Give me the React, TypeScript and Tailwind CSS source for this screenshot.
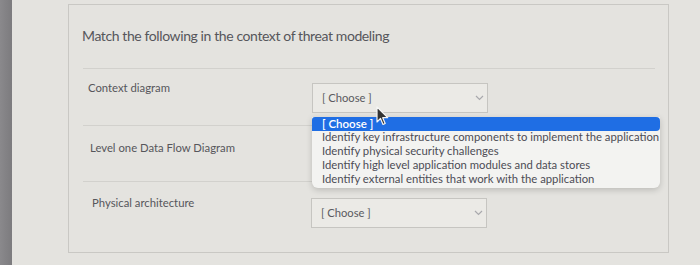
import React from "react";

const Chevron = () => (
  <svg width="9" height="6" viewBox="0 0 9 6" fill="none">
    <path d="M1 1l3.5 3.5L8 1" stroke="#a9a9ad" strokeWidth="1.2" />
  </svg>
);

const Select = ({ children }: { children?: React.ReactNode }) => (
  <div className="relative">
    <div className="w-[176px] h-[30px] border border-[#c6c5c1] bg-[#ebeae6] flex items-center justify-between pl-[9px] pr-[3px] text-[11.2px] text-[#5a5a60]">
      <span>[ Choose ]</span>
      <Chevron />
    </div>
    {children}
  </div>
);

const items = [
  "Identify key infrastructure components to implement the application",
  "Identify physical security challenges",
  "Identify high level application modules and data stores",
  "Identify external entities that work with the application",
];

export default function App() {
  return (
    <div
      className="w-[700px] h-[265px] bg-[#e4e3df] flex relative overflow-hidden"
      style={{ fontFamily: "Lato, 'Open Sans', sans-serif" }}
    >
      <div className="w-[12px] h-full bg-gradient-to-r from-[#8a898c] to-[#7c7b7e]" />
      <div className="w-[56px]" />
      <div className="w-[601px] h-[249px] mt-[4px] border border-[#c9c8c4] relative">
        <div className="ml-[13px] mt-[20px] text-[14px] tracking-[-0.4px] text-[#56565b]">
          Match the following in the context of threat modeling
        </div>
        <div className="ml-[14px] w-[572px] mt-[22px] border-t border-[#d2d1cd]" />
        <div className="ml-[14px] w-[572px]">
          <div className="flex h-[57px] border-b border-[#d2d1cd]">
            <div className="w-[229px] pl-[5px] pt-[11px] text-[11.3px] text-[#56565b]">Context diagram</div>
            <div className="pt-[14px]">
              <Select>
                <div className="absolute left-0 top-[34px] w-[348px] h-[71px] bg-[#f3f3f1] rounded-b-[6px] shadow-[0_2px_6px_rgba(0,0,0,0.18)] z-10 text-[11.3px] leading-[14px] text-[#4c4c55]">
                  <div className="h-[14px] bg-[#1f6ee4] rounded-t-[3px] rounded-r-[4px] text-white pl-[10px] font-semibold text-[11.5px] leading-[14px]">[ Choose ]</div>
                  <div className="pl-[10px] -mt-[1px]">
                    {items.map((t) => (
                      <div key={t} className="whitespace-nowrap">{t}</div>
                    ))}
                  </div>
                </div>
              </Select>
            </div>
          </div>
          <div className="flex h-[56px] border-b border-[#d2d1cd]">
            <div className="w-[229px] pl-[7px] pt-[14px] text-[11.3px] text-[#56565b]">Level one Data Flow Diagram</div>
          </div>
          <div className="flex h-[60px]">
            <div className="w-[228px] pl-[9px] pt-[13px] text-[11.3px] text-[#56565b]">Physical architecture</div>
            <div className="pt-[16px]">
              <Select />
            </div>
          </div>
        </div>
      </div>
      <svg className="absolute left-[376px] top-[106px] z-20" width="13" height="20" viewBox="0 0 13 20">
        <path d="M1 1v15l3.5-3.5 2.5 6 2.2-1-2.5-5.8h5z" fill="#333" stroke="#f5f5f5" strokeWidth="1.2" strokeLinejoin="round" />
      </svg>
    </div>
  );
}
